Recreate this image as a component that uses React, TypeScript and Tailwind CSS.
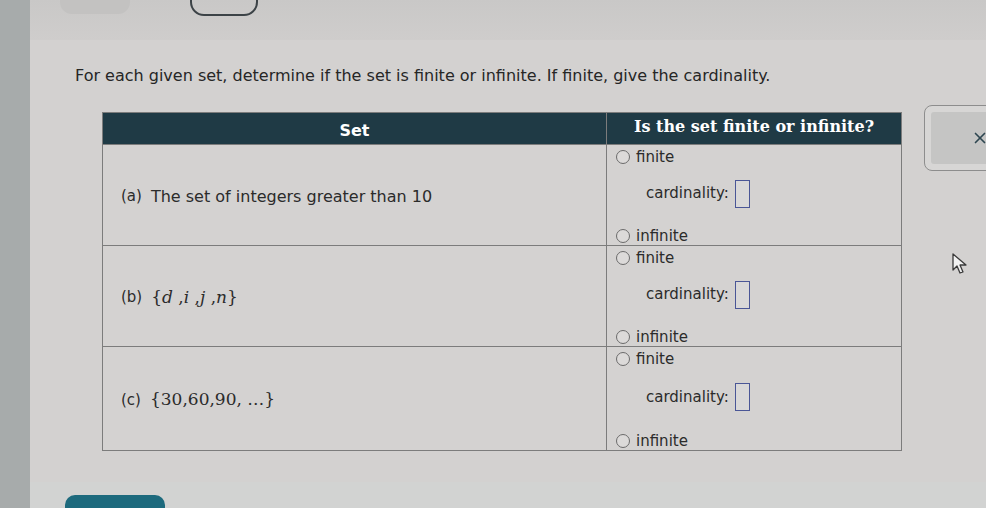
import { LuX } from "react-icons/lu";

const rows = [
  {
    label: "(a)",
    content: <span>The set of integers greater than 10</span>,
    h: "h-[101px]",
  },
  {
    label: "(b)",
    content: (
      <span className="font-['DejaVu_Serif',serif] text-[17px]">
        {"{"}
        <i>d</i> ,<i>i</i> ,<i>j</i> ,<i>n</i>
        {"}"}
      </span>
    ),
    h: "h-[101px]",
  },
  {
    label: "(c)",
    content: (
      <span className="font-['DejaVu_Serif',serif] text-[17px]">
        {"{"}30,60,90, …{"}"}
      </span>
    ),
    h: "h-[104px]",
  },
];

const Radio = ({ label }: { label: string }) => (
  <div className="flex items-center gap-[6px] leading-[18px]">
    <span className="w-[14px] h-[14px] rounded-full border border-[#6b6b6b] bg-[#dcdad9]" />
    <span>{label}</span>
  </div>
);

const Cursor = () => (
  <svg width="20" height="24" viewBox="0 0 20 24" className="absolute left-[921px] top-[252px]">
    <path
      d="M2 2 L2 18 L6 14 L9 21 L12 20 L9 13 L15 13 Z"
      fill="#f2f2f2"
      stroke="#3a3a3a"
      strokeWidth="1.3"
      strokeLinejoin="round"
    />
  </svg>
);

const App = () => {
  return (
    <div className="w-[986px] h-[508px] flex overflow-hidden bg-[#d3d1d0] text-[#2b2b2b] font-['DejaVu_Sans',sans-serif]">
      {/* left strip */}
      <div className="w-[30px] shrink-0 bg-[#a7abab]" />

      <div className="relative flex-1 flex flex-col">
        {/* top toolbar */}
        <div className="h-[40px] shrink-0 bg-gradient-to-b from-[#c9c8c7] to-[#cfcdcc] flex items-start gap-[60px] pl-[30px]">
          <div className="w-[70px] h-[22px] -mt-[8px] rounded-b-[12px] bg-[#c3c2c1]" />
          <div className="w-[68px] h-[24px] -mt-[8px] rounded-b-[14px] border-2 border-[#3c4347]" />
        </div>

        {/* instruction */}
        <p className="mt-[26px] pl-[45px] text-[16px] leading-[20px] text-[#262626]">
          For each given set, determine if the set is finite or infinite. If finite, give the cardinality.
        </p>

        <div className="flex items-start mt-[26px]">
          {/* table */}
          <div className="ml-[72px] w-[800px] border border-[#7c7c7c] bg-[#d4d2d1]">
            <div className="flex h-[31px] bg-[#1f3a45] text-white font-bold">
              <div className="w-[504px] flex items-center justify-center text-[16px] pt-[4px] border-r border-[#7c7c7c]">
                Set
              </div>
              <div className="flex-1 flex items-center justify-center text-[16px] font-['DejaVu_Serif',serif] -mt-[4px]">
                Is the set finite or infinite?
              </div>
            </div>
            {rows.map((row, i) => (
              <div key={i} className={`flex ${row.h} border-t border-[#7c7c7c]`}>
                <div className="w-[504px] flex items-center gap-[9px] pl-[18px] pt-[3px] text-[16px] border-r border-[#7c7c7c]">
                  <span className="text-[15px]">{row.label}</span>
                  {row.content}
                </div>
                <div className="flex-1 flex flex-col justify-between pl-[9px] pt-[3px] text-[15px]">
                  <Radio label="finite" />
                  <div className="flex items-center gap-[6px] pl-[30px] -mt-[6px]">
                    <span>cardinality:</span>
                    <span className="w-[15px] h-[28px] border border-[#4a5696] bg-[#d9d8d8]" />
                  </div>
                  <Radio label="infinite" />
                </div>
              </div>
            ))}
          </div>

          {/* side card */}
          <div className="ml-[22px] -mt-[7px] w-[80px] h-[66px] rounded-[8px] border border-[#8d8d8d] bg-[#d7d6d5] p-[6px] pr-0 shrink-0">
            <div className="h-full rounded-l-[3px] bg-[#c5c5c4] flex items-center pl-[40px]">
              <LuX className="text-[#2e4650] text-[18px]" strokeWidth={2.2} />
            </div>
          </div>
        </div>

        {/* bottom separator */}
        <div className="mt-[31px] h-[5px] bg-[#b4b7b6]" />
        <div className="flex-1 bg-[#d2d3d2] pt-[13px] pl-[35px]">
          <div className="w-[100px] h-[20px] rounded-t-[10px] bg-[#1d6a7d]" />
        </div>

        <Cursor />
      </div>
    </div>
  );
};

export default App;
